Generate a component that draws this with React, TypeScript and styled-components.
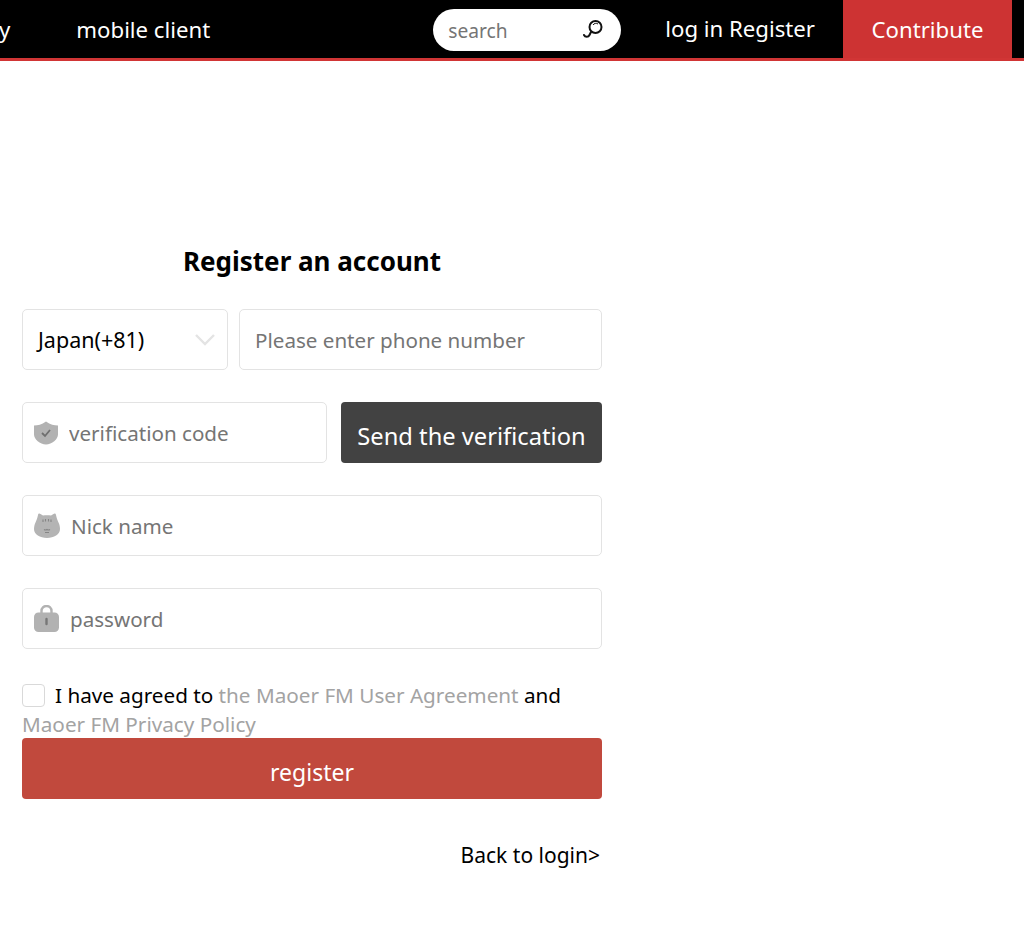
import React from "react";
import styled, { createGlobalStyle } from "styled-components";

const Global = createGlobalStyle`
  html, body { margin: 0; padding: 0; background: #fff; }
  body { font-family: "Noto Sans", "Open Sans", "Liberation Sans", sans-serif; color: #000; overflow: hidden; }
  input::placeholder { color: #757575; opacity: 1; }
`;

const Header = styled.header`
  height: 58px; background: #000; border-bottom: 3px solid #d13535;
  display: flex; align-items: stretch; justify-content: space-between; padding-right: 12px; color: #fff;
`;
const NavLeft = styled.nav`display: flex; align-items: center; gap: 66px;`;
const NavRight = styled.div`display: flex; align-items: stretch;`;
const NavLink = styled.span`font-size: 22.200px; line-height: 57px; white-space: nowrap;`;
const ClippedLink = styled(NavLink)`margin-left: -1px;`;
const Search = styled.div`
  align-self: center; width: 188px; height: 42px; border-radius: 21px; background: #fff; margin-top: 2px;
  display: flex; align-items: center; justify-content: space-between; padding: 0 16px 0 15px;
  box-sizing: border-box; margin-right: 44px; color: #757575; font-size: 19.200px;
`;
const Contribute = styled.a`
  width: 169px; margin-left: 28px; background: #cd3333; color: #fff; font-size: 22.200px;
  display: flex; align-items: center; justify-content: center;
`;

const Form = styled.main`
  width: 580px; margin: 179px 0 0 22px; display: flex; flex-direction: column;
`;
const Title = styled.h1`
  margin: 0 0 27px; font-size: 26px; line-height: 42px; font-weight: 700; text-align: center;
`;
const Row = styled.div`display: flex; margin-bottom: 32px;`;
const Field = styled.label<{ $width?: number }>`
  ${p => (p.$width ? `width: ${p.$width}px; flex: none;` : "flex: 1;")}
  height: 61px; box-sizing: border-box; border: 1px solid #e3e3e3; border-radius: 5px;
  display: flex; align-items: center; padding: 0 14px 0 11px; gap: 11px; min-width: 0;
`;
const Input = styled.input`
  border: 0; outline: 0; padding: 0; flex: 1; min-width: 0; background: transparent;
  font-family: inherit; font-size: 20.600px; color: #000;
`;
const PhoneField = styled(Field)`margin-left: 11px; padding-left: 15px;`;
const CountrySelect = styled(Field)`
  padding: 0 11px 0 15px; justify-content: space-between; font-size: 21.500px;
`;
const SendButton = styled.button`
  margin-left: 14px; flex: 1; height: 61px; border: 0; border-radius: 4px; background: #424242; color: #fff;
  font-family: inherit; font-size: 23.700px; padding: 6px 0 0; white-space: nowrap;
`;
const Agreement = styled.div`font-size: 20.700px; line-height: 29px; margin-bottom: -1px;`;
const CheckBox = styled.span`
  display: inline-block; width: 21px; height: 21px; border: 1px solid #d9d9d9; border-radius: 4px;
  vertical-align: -4px; margin-right: 10px;
`;
const Muted = styled.a`color: #a3a3a3;`;
const RegisterButton = styled.button`
  height: 61px; border: 0; border-radius: 4px; background: #c1493d; color: #fff;
  font-family: inherit; font-size: 23px; padding: 6px 0 0;
`;
const BackLink = styled.a`font-size: 21px; line-height: 30px; text-align: right; margin: 41px 2px 0 0;`;

const Magnifier = () => (
  <svg width="22" height="22" viewBox="0 0 22 22" fill="none" stroke="#111">
    <circle cx="12.500" cy="8" r="6" strokeWidth="2" />
    <path d="M10 6a3.500 3.500 0 0 1 5-1" strokeWidth="1" />
    <path d="M8 13l-1.500 3a3 3 0 0 1-5.500 0" strokeWidth="2" strokeLinecap="round" />
  </svg>
);
const Chevron = () => (
  <svg width="22" height="14" viewBox="0 0 22 14" fill="none" stroke="#e4e4e4" strokeWidth="2.400">
    <path d="M2 2l9 9 9-9" />
  </svg>
);
const Shield = () => (
  <svg width="24" height="24" viewBox="0 0 24 24">
    <path d="M0 4.500C4 4.500 7.500 3.500 12 .5c4.500 3 8 4 12 4v9c0 5-6 9.500-12 10C6 23 0 18.500 0 13.500z" fill="#b2b2b2" />
    <path d="M8 12l3 3 5-6" fill="none" stroke="#6f6f6f" strokeWidth="1.800" />
  </svg>
);
const Cat = () => (
  <svg width="26" height="25" viewBox="0 0 26 25">
    <path d="M4 2C4 .5 5.500 0 6.500 1L9 2.500c2.500-.5 5.500-.5 8 0L19.500 1c1-1 2.500-.5 2.500 1 .5 3 1.500 5 2.500 7.500 1 2 1.500 4.500 1.500 6.500 0 5.500-6 9-13 9S0 21.500 0 16c0-2 .5-4.500 1.500-6.500C2.500 7 3.500 5 4 2z" fill="#b4b4b4" />
    <path d="M9 6.500v2.500M11.500 6v2.500M14.500 6v2.500M17 6.500v2.500M10 16.500q1.500 1 3 0q1.500 1 3 0M11 19.500h4" stroke="#858585" strokeWidth="1.100" fill="none" />
  </svg>
);
const Lock = () => (
  <svg width="25" height="27" viewBox="0 0 25 27">
    <path d="M7.500 9V6a5 5 0 0 1 10 0v3" fill="none" stroke="#b2b2b2" strokeWidth="2.400" />
    <rect x="0" y="7.500" width="25" height="19.500" rx="4.500" fill="#b2b2b2" />
    <path d="M12.500 14v5" stroke="#777" strokeWidth="2.400" strokeLinecap="round" />
  </svg>
);

export default function App() {
  return (
    <>
      <Global />
      <Header>
        <NavLeft>
          <ClippedLink>y</ClippedLink>
          <NavLink>mobile client</NavLink>
        </NavLeft>
        <NavRight>
          <Search>
            <span>search</span>
            <Magnifier />
          </Search>
          <NavLink>log in Register</NavLink>
          <Contribute>Contribute</Contribute>
        </NavRight>
      </Header>
      <Form>
        <Title>Register an account</Title>
        <Row>
          <CountrySelect $width={206}>
            <span>Japan(+81)</span>
            <Chevron />
          </CountrySelect>
          <PhoneField>
            <Input placeholder="Please enter phone number" />
          </PhoneField>
        </Row>
        <Row>
          <Field $width={305}>
            <Shield />
            <Input placeholder="verification code" />
          </Field>
          <SendButton>Send the verification</SendButton>
        </Row>
        <Row>
          <Field>
            <Cat />
            <Input placeholder="Nick name" />
          </Field>
        </Row>
        <Row>
          <Field>
            <Lock />
            <Input placeholder="password" />
          </Field>
        </Row>
        <Agreement>
          <CheckBox />I have agreed to <Muted>the Maoer FM User Agreement</Muted> and <Muted>Maoer FM Privacy Policy</Muted>
        </Agreement>
        <RegisterButton>register</RegisterButton>
        <BackLink>Back to login&gt;</BackLink>
      </Form>
    </>
  );
}
